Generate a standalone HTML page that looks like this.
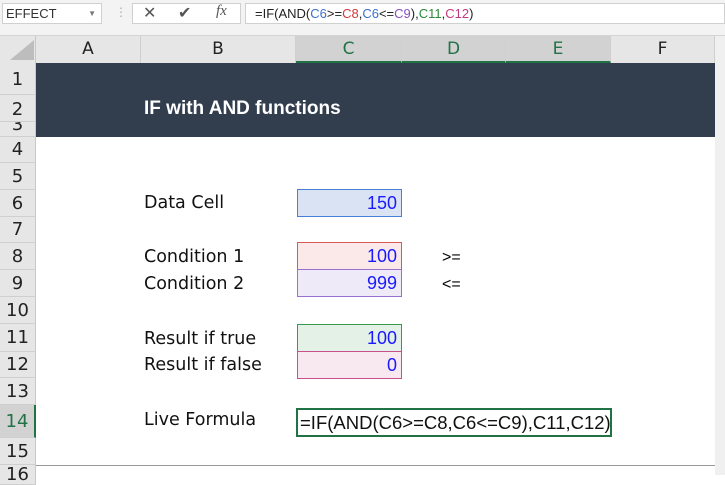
<!DOCTYPE html>
<html><head><meta charset="utf-8"><style>
*{margin:0;padding:0;box-sizing:border-box}
body{width:725px;height:475px;overflow:hidden;background:#fff;font-family:"Liberation Sans",Arial,sans-serif;position:relative}
.a{position:absolute}
.rh{position:absolute;left:0;width:36px;background:#e6e6e6;border-bottom:1px solid #cfcfcf;color:#222;text-align:center;border-right:1px solid #c8c8c8;font-family:"DejaVu Sans",sans-serif;font-size:18px}
.ch{position:absolute;top:36px;height:27px;background:#e6e6e6;border-right:1px solid #cfcfcf;text-align:center;font-size:17px;line-height:27px;color:#222;font-family:"DejaVu Sans",sans-serif}
.sel{background:#d2d2d2;color:#217346;border-bottom:2px solid #217346}
.lbl{position:absolute;left:144px;font-size:17.5px;color:#111;font-family:"DejaVu Sans",sans-serif}
.box{position:absolute;left:297px;width:105px;text-align:right;padding-right:4px;color:#1a1aff;font-size:18px}
</style></head><body>
<div class="a" style="left:0;top:0;width:725px;height:36px;background:#f3f3f3;border-bottom:1px solid #d4d4d4"></div>
<div class="a" style="left:2px;top:3px;width:100px;height:21px;background:#fff;border:1px solid #d0d0d0;font-size:13px;line-height:19px;padding-left:3px;color:#333">EFFECT<span style="position:absolute;right:5px;top:0;font-size:8px;color:#777">▼</span></div>
<div class="a" style="left:115px;top:5px;color:#aaa;font-size:12px">⋮</div>
<div class="a" style="left:132px;top:3px;width:109px;height:21px;background:#fff;border:1px solid #d0d0d0"></div>
<div class="a" style="left:143px;top:3px;font-size:16px;color:#555">✕</div>
<div class="a" style="left:178px;top:3px;font-size:16px;color:#555">✔</div>
<div class="a" style="left:216px;top:3px;font-size:15px;color:#555;font-family:'Liberation Serif',serif;font-style:italic">fx</div>
<div class="a" style="left:245px;top:3px;width:480px;height:21px;background:#fff;border:1px solid #d0d0d0;font-size:13px;line-height:19px;padding-left:9px;color:#222">=IF(AND(<span style="color:#3a6fd0">C6</span>&gt;=<span style="color:#d03a3a">C8</span>,<span style="color:#3a6fd0">C6</span>&lt;=<span style="color:#8a4fc0">C9</span>),<span style="color:#2a8a3a">C11</span>,<span style="color:#c03a80">C12</span>)</div>

<div class="a" style="left:0;top:36px;width:36px;height:27px;background:#e6e6e6;border-right:1px solid #c8c8c8"></div>
<div class="a" style="left:10px;top:40px;width:0;height:0;border-left:24px solid transparent;border-bottom:20px solid #bdbdbd"></div>
<div class="ch" style="left:36px;width:105px">A</div>
<div class="ch" style="left:141px;width:155px">B</div>
<div class="ch sel" style="left:296px;width:106px">C</div>
<div class="ch sel" style="left:402px;width:104px">D</div>
<div class="ch sel" style="left:506px;width:105px">E</div>
<div class="ch" style="left:611px;width:104px">F</div>
<div class="a" style="left:715px;top:36px;width:10px;height:439px;background:#f0f0f0"></div>

<div class="rh" style="top:63px;height:32px;line-height:34px">1</div>
<div class="rh" style="top:95px;height:27px;line-height:30px">2</div>
<div class="rh" style="top:122px;height:15px;overflow:hidden;line-height:6px">3</div>
<div class="rh" style="top:137px;height:26px;line-height:26px">4</div>
<div class="rh" style="top:163px;height:27px;line-height:27px">5</div>
<div class="rh" style="top:190px;height:27px;line-height:27px">6</div>
<div class="rh" style="top:217px;height:26px;line-height:26px">7</div>
<div class="rh" style="top:243px;height:27px;line-height:27px">8</div>
<div class="rh" style="top:270px;height:27px;line-height:27px">9</div>
<div class="rh" style="top:297px;height:27px;line-height:27px">10</div>
<div class="rh" style="top:324px;height:28px;line-height:28px">11</div>
<div class="rh" style="top:352px;height:26px;line-height:26px">12</div>
<div class="rh" style="top:378px;height:27px;line-height:27px">13</div>
<div class="rh" style="top:405px;height:33px;line-height:33px;background:#d2d2d2;color:#217346;border-right:2px solid #217346">14</div>
<div class="rh" style="top:438px;height:27px;line-height:27px">15</div>
<div class="rh" style="top:465px;height:20px;line-height:20px">16</div>
<div class="a" style="left:36px;top:465px;width:679px;height:1px;background:#999"></div>

<div class="a" style="left:36px;top:63px;width:679px;height:74px;background:#323d4d"></div>
<div class="a" style="left:144px;top:98px;color:#fff;font-weight:bold;font-size:19px">IF with AND functions</div>

<div class="lbl" style="top:193px">Data Cell</div>
<div class="lbl" style="top:247px">Condition 1</div>
<div class="lbl" style="top:274px">Condition 2</div>
<div class="lbl" style="top:329px">Result if true</div>
<div class="lbl" style="top:355px">Result if false</div>
<div class="lbl" style="top:410px">Live Formula</div>
<div class="a" style="left:442px;top:249px;font-size:16px">&gt;=</div>
<div class="a" style="left:442px;top:276px;font-size:16px">&lt;=</div>

<div class="box" style="top:189px;height:28px;line-height:26px;background:#dae3f3;border:1px solid #4a7fd6">150</div>
<div class="box" style="top:242px;height:28px;line-height:26px;background:#fbe9e9;border:1px solid #d65a5a">100</div>
<div class="box" style="top:269px;height:28px;line-height:26px;background:#efeaf8;border:1px solid #9a6fcf">999</div>
<div class="box" style="top:324px;height:28px;line-height:26px;background:#e3f1e6;border:1px solid #3a9a4a">100</div>
<div class="box" style="top:351px;height:28px;line-height:26px;background:#f8e8ef;border:1px solid #c9508a">0</div>
<div class="a" style="left:296px;top:408px;width:316px;height:29px;border:2px solid #217346;background:#fff;font-size:18.5px;line-height:25px;padding-left:2px;font-family:'Liberation Sans',sans-serif;color:#111;white-space:nowrap;overflow:hidden">=IF(AND(C6&gt;=C8,C6&lt;=C9),C11,C12)</div>
</body></html>
